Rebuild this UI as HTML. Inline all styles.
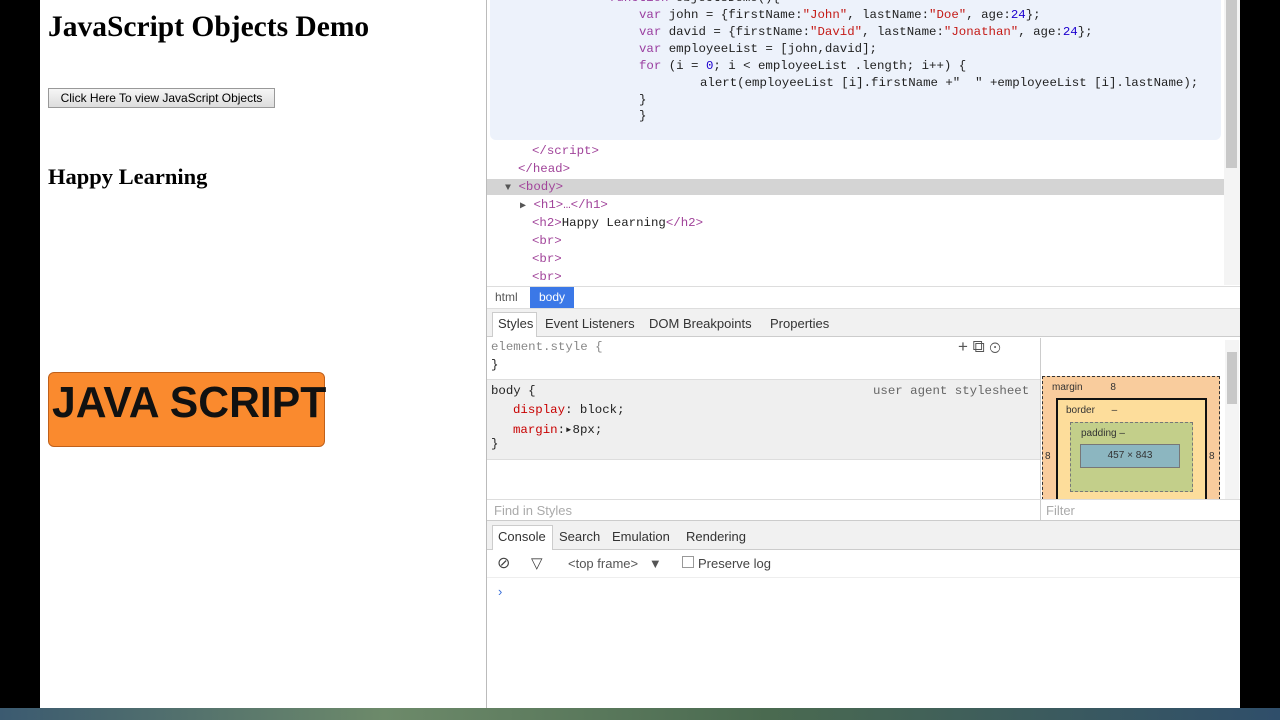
<!DOCTYPE html><html><head><style>
body{margin:0;width:1280px;height:720px;position:relative;overflow:hidden;background:#000;font-family:"Liberation Sans",sans-serif}
.a{position:absolute}
.m{font-family:"Liberation Mono",monospace;font-size:12.4px;white-space:pre;color:#222}
.t{color:#a1449a}.k{color:#9a3ea0}.s{color:#c41a16}.n{color:#1c00cf}.p{color:#c80000}
.ui{font-size:13px;color:#333}
</style></head><body>
<div class="a" style="left:40px;top:0;width:446px;height:708px;background:#fff"></div>
<div class="a" style="left:486px;top:0;width:1px;height:708px;background:#bbb"></div>
<div class="a" style="left:48px;top:11px;font:bold 29.5px 'Liberation Serif',serif;color:#000">JavaScript Objects Demo</div>
<div class="a" style="left:48px;top:88px;width:225px;height:18px;border:1px solid #999;background:linear-gradient(#f6f6f6,#ddd);font-size:12px;line-height:18px;text-align:center;color:#000">Click Here To view JavaScript Objects</div>
<div class="a" style="left:48px;top:164px;font:bold 22.5px 'Liberation Serif',serif;color:#000">Happy Learning</div>
<div class="a" style="left:48px;top:372px;width:275px;height:73px;border:1px solid #c0601a;border-radius:6px;background:#fa8a2e"></div>
<div class="a" style="left:52px;top:378px;font:bold 44px 'Liberation Sans',sans-serif;color:#111;transform:scaleX(0.97);transform-origin:left">JAVA SCRIPT</div>

<div class="a" style="left:487px;top:0;width:753px;height:708px;background:#fff"></div>
<div class="a" style="left:490px;top:0;width:731px;height:140px;background:#edf2fb;border-radius:0 0 6px 6px"></div>
<div class="a m" style="left:609px;top:-9px"><span class="k">function</span> objectsDemo(){</div>
<div class="a m" style="left:639px;top:8px"><span class="k">var</span> john = {firstName:<span class="s">"John"</span>, lastName:<span class="s">"Doe"</span>, age:<span class="n">24</span>};</div>
<div class="a m" style="left:639px;top:25px"><span class="k">var</span> david = {firstName:<span class="s">"David"</span>, lastName:<span class="s">"Jonathan"</span>, age:<span class="n">24</span>};</div>
<div class="a m" style="left:639px;top:42px"><span class="k">var</span> employeeList = [john,david];</div>
<div class="a m" style="left:639px;top:59px"><span class="k">for</span> (i = <span class="n">0</span>; i &lt; employeeList .length; i++) {</div>
<div class="a m" style="left:700px;top:76px">alert(employeeList [i].firstName +"  " +employeeList [i].lastName);</div>
<div class="a m" style="left:639px;top:93px">}</div>
<div class="a m" style="left:639px;top:109px">}</div>
<div class="a m t" style="left:532px;top:144px">&lt;/script&gt;</div>
<div class="a m t" style="left:518px;top:162px">&lt;/head&gt;</div>
<div class="a" style="left:487px;top:179px;width:737px;height:16px;background:#d4d4d4"></div>
<div class="a m t" style="left:505px;top:180px"><span style="color:#555;font-size:10px">▼</span> &lt;body&gt;</div>
<div class="a m t" style="left:520px;top:198px"><span style="color:#555;font-size:10px">▶</span> &lt;h1&gt;…&lt;/h1&gt;</div>
<div class="a m t" style="left:532px;top:216px">&lt;h2&gt;<span style="color:#222">Happy Learning</span>&lt;/h2&gt;</div>
<div class="a m t" style="left:532px;top:234px">&lt;br&gt;</div>
<div class="a m t" style="left:532px;top:252px">&lt;br&gt;</div>
<div class="a m t" style="left:532px;top:270px">&lt;br&gt;</div>
<div class="a" style="left:1224px;top:0;width:16px;height:285px;background:#f4f4f4"></div>
<div class="a" style="left:1226px;top:0;width:11px;height:168px;background:#c8c8c8"></div>
<div class="a" style="left:487px;top:286px;width:753px;height:1px;background:#ddd"></div>
<div class="a ui" style="left:495px;top:290px;font-size:12px;color:#555">html</div>
<div class="a" style="left:530px;top:287px;width:44px;height:21px;background:#3b78e7;color:#fff;font-size:12px;line-height:21px;text-align:center">body</div>
<div class="a" style="left:487px;top:308px;width:753px;height:29px;background:#f1f1f1;border-top:1px solid #ddd;border-bottom:1px solid #ccc;box-sizing:border-box"></div>
<div class="a" style="left:492px;top:312px;width:45px;height:25px;background:#fff;border:1px solid #ccc;border-bottom:none;box-sizing:border-box"></div>
<div class="a ui" style="left:498px;top:316px">Styles</div>
<div class="a ui" style="left:545px;top:316px">Event Listeners</div>
<div class="a ui" style="left:649px;top:316px">DOM Breakpoints</div>
<div class="a ui" style="left:770px;top:316px">Properties</div>
<div class="a m" style="left:491px;top:340px;color:#888">element.style {</div>
<div class="a m" style="left:491px;top:358px">}</div>
<div class="a ui" style="left:958px;top:337px;font-size:17px;color:#555">+ ⧉ ⊙</div>
<div class="a" style="left:487px;top:379px;width:553px;height:79px;background:#efefef;border-top:1px solid #ddd;border-bottom:1px solid #ddd"></div>
<div class="a m" style="left:491px;top:384px">body {</div>
<div class="a m" style="left:873px;top:384px;color:#666">user agent stylesheet</div>
<div class="a m" style="left:513px;top:403px"><span class="p">display</span>: block;</div>
<div class="a m" style="left:513px;top:421px"><span class="p">margin</span>:▸8px;</div>
<div class="a m" style="left:491px;top:437px">}</div>
<div class="a" style="left:1040px;top:338px;width:1px;height:183px;background:#ccc"></div>
<div class="a" style="left:1042px;top:376px;width:178px;height:124px;background:#f9cc9d;border:1px dashed #333;box-sizing:border-box"></div>
<div class="a" style="left:1056px;top:398px;width:151px;height:102px;background:#fddd9b;border:2px solid #111;border-bottom:none;box-sizing:border-box"></div>
<div class="a" style="left:1070px;top:422px;width:123px;height:70px;background:#c3cf8a;border:1px dashed #777;box-sizing:border-box"></div>
<div class="a" style="left:1080px;top:444px;width:100px;height:24px;background:#8cb6c0;border:1px solid #777;box-sizing:border-box;font-size:10px;line-height:22px;text-align:center;color:#333">457 × 843</div>
<div class="a" style="left:1052px;top:382px;font-size:10px;color:#333">margin &nbsp;&nbsp;&nbsp;&nbsp;&nbsp;&nbsp;&nbsp;&nbsp;&nbsp;8</div>
<div class="a" style="left:1066px;top:405px;font-size:10px;color:#333">border &nbsp;&nbsp;&nbsp;&nbsp;&nbsp;–</div>
<div class="a" style="left:1081px;top:428px;font-size:10px;color:#333">padding –</div>
<div class="a" style="left:1045px;top:451px;font-size:10px;color:#333">8</div>
<div class="a" style="left:1209px;top:451px;font-size:10px;color:#333">8</div>
<div class="a" style="left:1225px;top:340px;width:14px;height:160px;background:#f4f4f4"></div>
<div class="a" style="left:1227px;top:352px;width:10px;height:52px;background:#c8c8c8"></div>
<div class="a" style="left:487px;top:499px;width:753px;height:22px;border-top:1px solid #ddd;border-bottom:1px solid #ccc;box-sizing:border-box"></div>
<div class="a ui" style="left:494px;top:503px;color:#aaa">Find in Styles</div>
<div class="a ui" style="left:1046px;top:503px;color:#aaa">Filter</div>
<div class="a" style="left:487px;top:521px;width:753px;height:29px;background:#f1f1f1;border-bottom:1px solid #ccc;box-sizing:border-box"></div>
<div class="a" style="left:492px;top:525px;width:61px;height:25px;background:#fff;border:1px solid #ccc;border-bottom:none;box-sizing:border-box"></div>
<div class="a ui" style="left:498px;top:529px">Console</div>
<div class="a ui" style="left:559px;top:529px">Search</div>
<div class="a ui" style="left:612px;top:529px">Emulation</div>
<div class="a ui" style="left:686px;top:529px">Rendering</div>
<div class="a ui" style="left:497px;top:553px;font-size:16px;color:#444">⊘</div>
<div class="a ui" style="left:531px;top:554px;font-size:15px;color:#444">▽</div>
<div class="a ui" style="left:568px;top:556px;color:#555">&lt;top frame&gt; &nbsp;&nbsp;▼</div>
<div class="a" style="left:682px;top:556px;width:10px;height:10px;border:1px solid #999"></div>
<div class="a ui" style="left:698px;top:556px;color:#444">Preserve log</div>
<div class="a" style="left:487px;top:577px;width:753px;height:1px;background:#eee"></div>
<div class="a ui" style="left:498px;top:584px;color:#3a6fd8">›</div>
<div class="a" style="left:0;top:708px;width:1280px;height:12px;background:linear-gradient(90deg,#3b5a70,#6d8a6a 30%,#4a6a50 60%,#2f4e6a)"></div>
</body></html>
